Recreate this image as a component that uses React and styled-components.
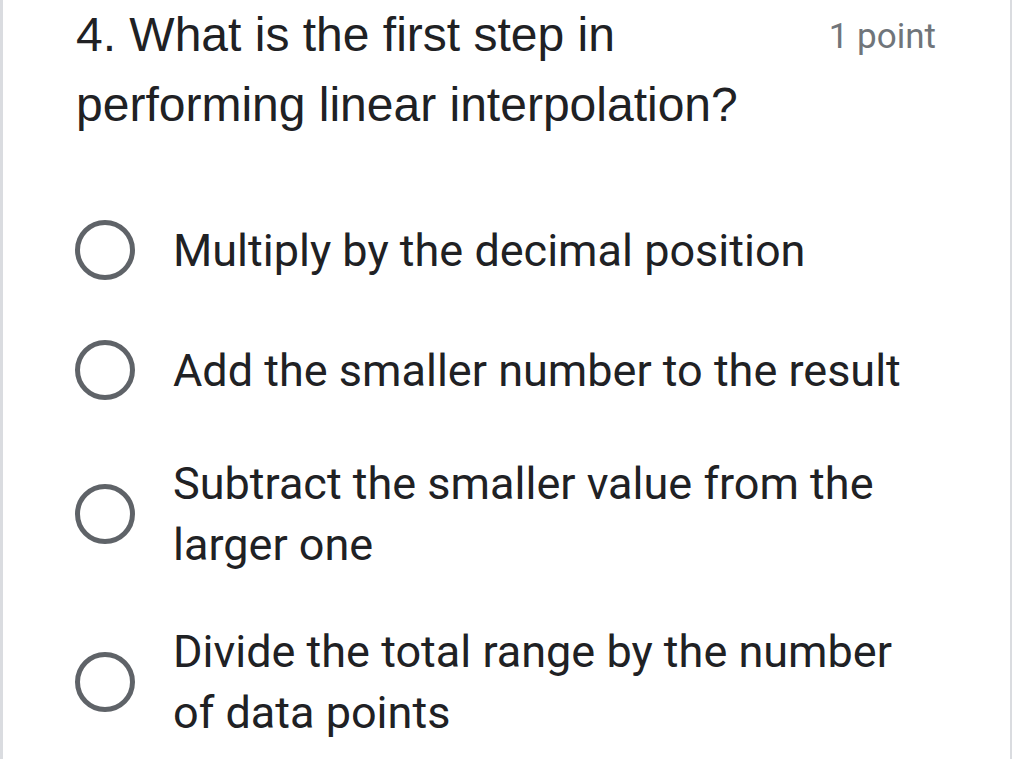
import React from 'react';
import styled, { createGlobalStyle } from 'styled-components';

const GlobalStyle = createGlobalStyle`
  html, body {
    margin: 0;
    padding: 0;
    background: #ffffff;
  }
`;

const Card = styled.div`
  box-sizing: border-box;
  width: 1012px;
  height: 759px;
  overflow: hidden;
  background: #ffffff;
  border-left: 3px solid #dadce0;
  border-right: 2px solid #dadce0;
  padding: 0 74px 0 72px;
`;

const Header = styled.div`
  display: flex;
  align-items: flex-start;
  gap: 24px;
  padding-left: 1px;
`;

const Title = styled.div`
  flex: 1;
  font-family: "Liberation Sans", Arial, sans-serif;
  font-size: 48px;
  line-height: 70px;
  color: #202124;
`;

const Points = styled.div`
  flex: none;
  font-family: Roboto, "Liberation Sans", sans-serif;
  font-size: 35px;
  line-height: 70px;
  margin-top: 2px;
  color: #70757a;
`;

const Options = styled.div`
  display: flex;
  flex-direction: column;
  margin-top: 50px;
`;

const Option = styled.label`
  display: flex;
  align-items: center;
  gap: 38px;
  min-height: 120px;
  padding: ${p => (p.$multi ? '23px 0' : '0')};
  box-sizing: border-box;
`;

const Radio = styled.span`
  flex: none;
  box-sizing: border-box;
  width: 60px;
  height: 60px;
  border: 5px solid #5f6368;
  border-radius: 50%;
`;

const OptionText = styled.span`
  font-family: Roboto, "Liberation Sans", sans-serif;
  font-size: 45px;
  line-height: 61px;
  color: #202124;
`;

const options = [
  'Multiply by the decimal position',
  'Add the smaller number to the result',
  'Subtract the smaller value from the larger one',
  'Divide the total range by the number of data points',
];

export default function App() {
  return (
    <>
      <GlobalStyle />
      <Card>
        <Header>
          <Title>4. What is the first step in performing linear interpolation?</Title>
          <Points>1 point</Points>
        </Header>
        <Options>
          {options.map((text, i) => (
            <Option key={i} $multi={i > 1}>
              <Radio />
              <OptionText>{text}</OptionText>
            </Option>
          ))}
        </Options>
      </Card>
    </>
  );
}
